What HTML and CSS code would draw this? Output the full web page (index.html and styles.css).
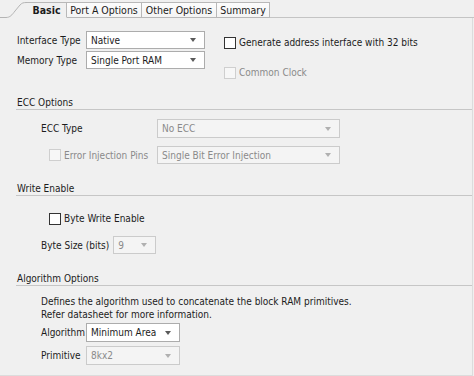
FILE: index.html
```html
<!DOCTYPE html>
<html>
<head>
<meta charset="utf-8">
<link rel="stylesheet" href="styles.css">
</head>
<body>
<div class="tabs">
  <div class="tab-lead"><svg width="27" height="18" viewBox="0 0 27 18"><path d="M0 17.5 H6 C10 17.5 12 15 15 11 L20 5 C22 3 23 2.5 27 2.5 V18 H0 Z" fill="#f0f0f0"/><path d="M0 17.5 H6 C10 17.5 12 15 15 11 L20 5 C22 3 23 2.5 27 2.5" fill="none" stroke="#b4b4b4" stroke-width="1"/></svg></div>
  <div class="tab active w-basic">Basic</div>
  <div class="tab w-port">Port A Options</div>
  <div class="tab w-other">Other Options</div>
  <div class="tab w-sum">Summary</div>
  <div class="tab-rest"></div>
</div>
<div class="panel">
  <div class="top">
    <div class="fields">
      <span class="lbl">Interface Type</span><div class="select">Native</div>
      <span class="lbl">Memory Type</span><div class="select">Single Port RAM</div>
    </div>
    <div class="checks">
      <div class="check"><span class="box"></span><span>Generate address interface with 32 bits</span></div>
      <div class="check disabled"><span class="box"></span><span>Common Clock</span></div>
    </div>
  </div>

  <div class="section s-ecc">ECC Options</div>
  <div class="ecc">
    <span class="lbl">ECC Type</span><div class="select disabled tall">No ECC</div>
    <div class="check disabled indent"><span class="box"></span><span>Error Injection Pins</span></div><div class="select disabled">Single Bit Error Injection</div>
  </div>

  <div class="section s-we">Write Enable</div>
  <div class="we">
    <div class="check indent"><span class="box"></span><span>Byte Write Enable</span></div>
    <div class="bytesize"><span class="lbl">Byte Size (bits)</span><div class="select disabled small">9</div></div>
  </div>

  <div class="section s-alg">Algorithm Options</div>
  <div class="alg">
    <p class="desc">Defines the algorithm used to concatenate the block RAM primitives.<br>Refer datasheet for more information.</p>
    <div class="alg-grid">
      <span class="lbl">Algorithm</span><div class="select tall">Minimum Area</div>
      <span class="lbl">Primitive</span><div class="select disabled tall">8kx2</div>
    </div>
  </div>
</div>
</body>
</html>
```
FILE: styles.css
```css
html, body {
  margin: 0;
  padding: 0;
}
body {
  width: 474px;
  height: 376px;
  overflow: hidden;
  background: #f0f0f0;
  font-family: "DejaVu Sans Condensed", "DejaVu Sans", sans-serif;
  font-stretch: condensed;
  font-size: 10px;
  color: #1c1c1c;
}

/* Tabs */
.tabs {
  display: flex;
  align-items: flex-end;
  height: 18px;
}
.tab-lead {
  width: 27px;
  height: 18px;
}
.tab-lead svg { display: block; }
.tab {
  box-sizing: border-box;
  height: 16px;
  line-height: 14px;
  text-align: center;
  border-top: 1px solid #b8b8b8;
  border-right: 1px solid #b8b8b8;
  border-bottom: 1px solid #b8b8b8;
  background: linear-gradient(#fcfcfc, #f4f4f4);
  color: #1c1c1c;
  white-space: nowrap;
  font-size: 10.5px;
}
.tab.active {
  height: 16px;
  background: #f0f0f0;
  border-bottom-color: transparent;
  font-weight: bold;
}
.w-basic { width: 40px; }
.w-port { width: 75px; }
.w-other { width: 75px; }
.w-sum { width: 53px; }
.tab-rest {
  flex: 1;
  height: 18px;
  box-sizing: border-box;
  border-bottom: 1px solid #c4c4c4;
}

/* Panel */
.panel {
  box-sizing: border-box;
  height: 358px;
  width: 473px;
  padding-left: 17px;
  border-right: 1px solid #dcdcdc;
  border-bottom: 1px solid #dcdcdc;
}

.lbl { white-space: nowrap; }

.select {
  position: relative;
  box-sizing: border-box;
  height: 18px;
  border: 1px solid #acacac;
  background: #ffffff;
  padding-left: 4px;
  display: flex;
  align-items: center;
  white-space: nowrap;
}
.select.tall { height: 19px; }
.select::after {
  content: "";
  position: absolute;
  right: 8px;
  top: 50%;
  margin-top: -2px;
  border-left: 3.5px solid transparent;
  border-right: 3.5px solid transparent;
  border-top: 4px solid #5a5a5a;
}
.select.disabled {
  background: #f4f4f4;
  border-color: #cbcbcb;
  color: #8a8a8a;
}
.select.disabled::after {
  border-top-color: #b0b0b0;
}

.check {
  display: flex;
  align-items: center;
  height: 13px;
  white-space: nowrap;
}
.box {
  box-sizing: border-box;
  width: 12px;
  height: 12px;
  border: 1px solid #333333;
  background: #ffffff;
  margin-right: 3px;
  flex: none;
}
.check.disabled { color: #8a8a8a; }
.check.disabled .box {
  border-color: #cfcfcf;
  background: #f7f7f7;
}

/* Top section */
.top {
  display: flex;
  align-items: flex-start;
  padding-top: 13px;
}
.fields {
  display: grid;
  grid-template-columns: 69px 119px;
  row-gap: 2px;
  align-items: center;
}
.checks {
  display: flex;
  flex-direction: column;
  gap: 17px;
  margin-left: 19px;
  padding-top: 5px;
}

/* Section heading */
.section {
  line-height: 13px;
  border-bottom: 1px solid #c6c6c6;
  margin-left: -1px;
  padding-left: 1px;
}
.s-ecc { margin-top: 17px; }
.s-we { margin-top: 18px; }
.s-alg { margin-top: 18px; }

/* ECC */
.ecc {
  display: grid;
  grid-template-columns: 116px 183px;
  row-gap: 8px;
  align-items: center;
  margin-top: 9px;
  padding-left: 24px;
}
.indent { padding-left: 8px; }

/* Write enable */
.we {
  padding-left: 24px;
  margin-top: 16px;
}
.bytesize {
  display: flex;
  align-items: center;
  gap: 4px;
  margin-top: 11px;
}
.select.small { width: 43px; }

/* Algorithm */
.alg {
  padding-left: 24px;
}
.desc {
  margin: 9px 0 0 0;
  line-height: 13px;
}
.alg-grid {
  display: grid;
  grid-template-columns: 45px 94px;
  row-gap: 4px;
  align-items: center;
  margin-top: 2px;
}
```
